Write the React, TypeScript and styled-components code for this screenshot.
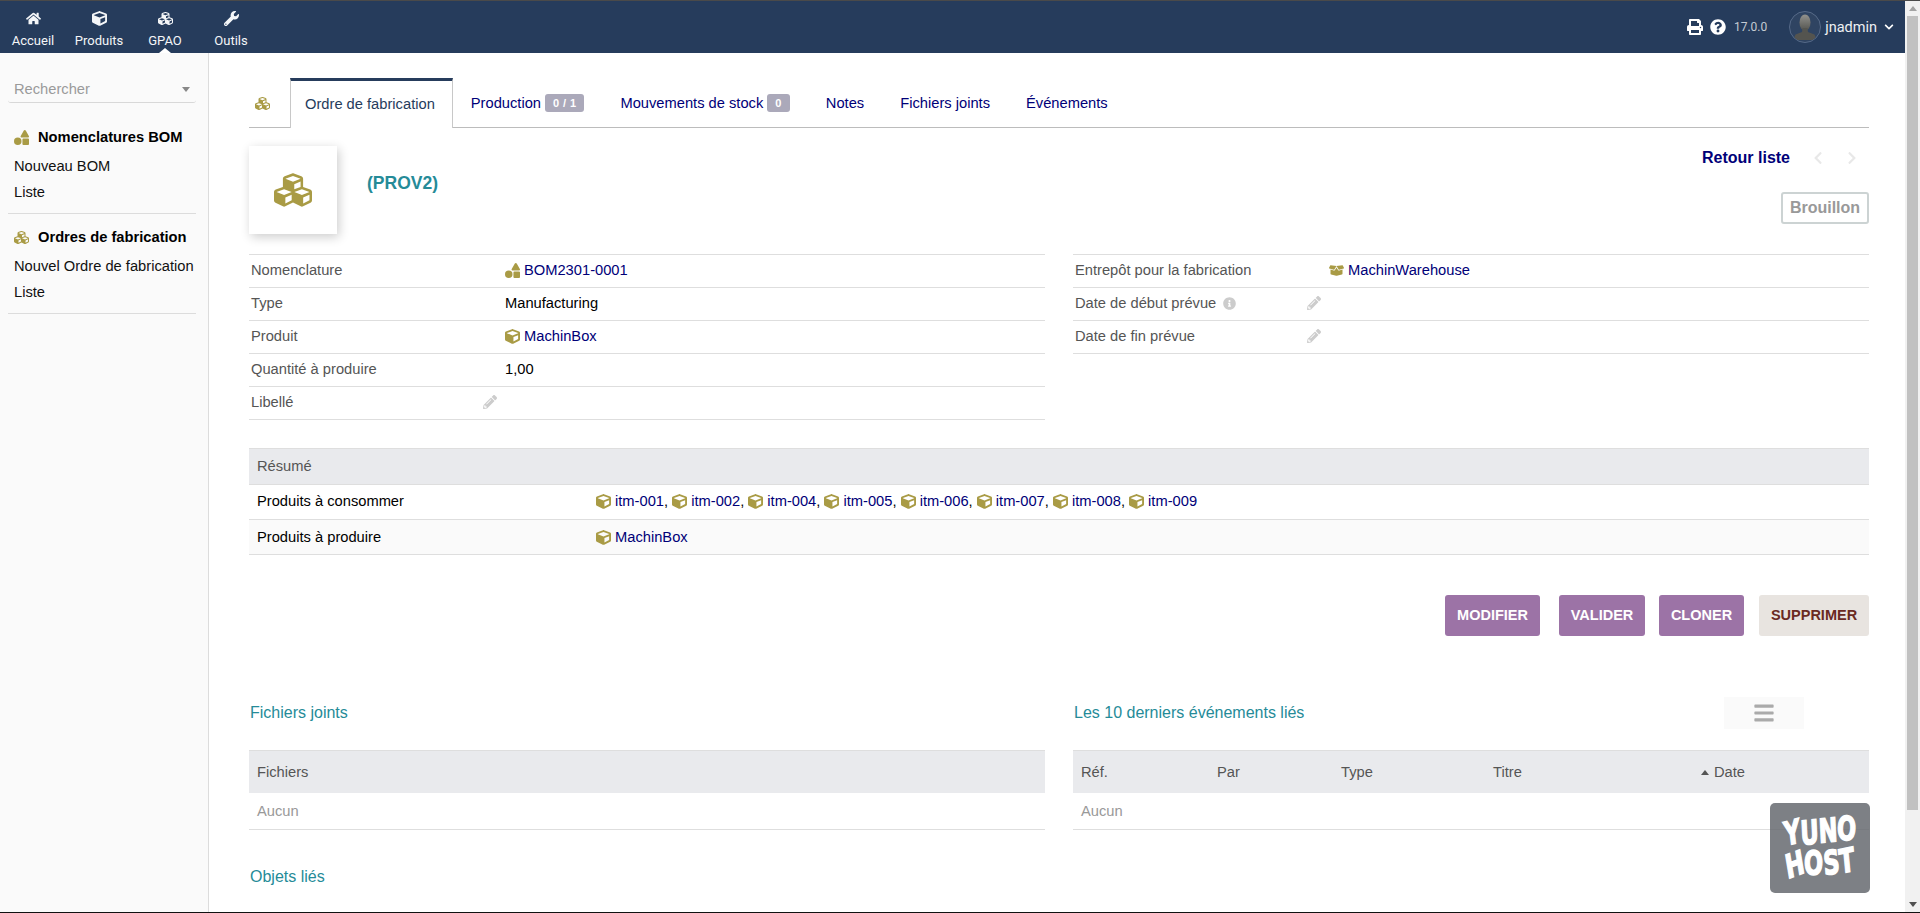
import { createGlobalStyle, styled } from "styled-components";
import { ReactNode } from "react";
import {
  FaBars,
  FaBoxOpen,
  FaChevronDown,
  FaChevronLeft,
  FaChevronRight,
  FaCube,
  FaCubes,
  FaHome,
  FaInfoCircle,
  FaPencilAlt,
  FaPrint,
  FaQuestionCircle,
  FaShapes,
  FaWrench,
} from "react-icons/fa";

const navy = "#263c5c";
const link = "#000078";
const olive = "#a99b45";
const teal = "#258b98";
const line = "#dedede";

const GlobalStyle = createGlobalStyle`
  html, body {
    margin: 0;
    height: 100%;
    overflow: hidden;
    background: #fff;
  }
  body {
    font-family: "Liberation Sans", Arial, sans-serif;
    font-size: 14.7px;
    color: #000;
  }
  * {
    box-sizing: border-box;
  }
`;

const Screen = styled.div`
  height: 913px;
  display: flex;
  border-top: 1px solid #4a4a4a;
  border-bottom: 1px solid #111;
  overflow: hidden;
`;

const Page = styled.div`
  flex: 1;
  min-width: 0;
  display: flex;
  flex-direction: column;
  position: relative;
`;

const ScrollTrack = styled.div`
  width: 15px;
  background: #f1f1f1;
  display: flex;
  flex-direction: column;
  align-items: center;
`;

const ScrollArrow = styled.div`
  height: 15px;
  width: 15px;
  display: flex;
  align-items: center;
  justify-content: center;
`;

const ScrollThumb = styled.div`
  width: 11px;
  height: 794px;
  background: #c1c1c1;
`;

const ScrollSpace = styled.div`
  flex: 1;
`;

const Caret = styled.span<{ $up?: boolean; $color: string }>`
  display: inline-block;
  flex: none;
  width: 0;
  height: 0;
  border-left: 4px solid transparent;
  border-right: 4px solid transparent;
  ${(p) => (p.$up ? "border-bottom" : "border-top")}: 5px solid ${(p) => p.$color};
`;

const TopBar = styled.header`
  height: 52px;
  flex: none;
  background: ${navy};
  display: flex;
  align-items: stretch;
  color: #fff;
`;

const NavItem = styled.div<{ $active?: boolean }>`
  width: 66px;
  position: relative;
  display: flex;
  flex-direction: column;
  align-items: center;
  padding-top: 10px;
  font-family: Roboto, sans-serif;
  font-size: 13px;
  color: #f4f6f8;

  &::after {
    content: "";
    display: ${(p) => (p.$active ? "block" : "none")};
    position: absolute;
    bottom: 0;
    left: 50%;
    margin-left: -6px;
    border: 6px solid transparent;
    border-top: 0;
    border-bottom: 5px solid #fff;
  }
`;

const NavLabel = styled.span`
  margin-top: 7px;
  line-height: 15px;
`;

const TopRight = styled.div`
  margin-left: auto;
  display: flex;
  align-items: center;
  padding-right: 11px;
`;

const HelpIcon = styled(FaQuestionCircle)`
  margin-left: 7px;
`;

const Version = styled.span`
  font-family: Roboto, sans-serif;
  font-size: 12px;
  color: #c4cad2;
  margin-left: 8px;
  margin-right: 22px;
`;

const Avatar = styled.div`
  width: 32px;
  height: 32px;
  border-radius: 50%;
  border: 1px solid #566a88;
  overflow: hidden;
  margin-right: 4px;
  background: #2f4462;
`;

const UserName = styled.span`
  font-family: Roboto, sans-serif;
  font-size: 14.5px;
  color: #eef0f3;
  margin-right: 7px;
`;

const Body = styled.div`
  flex: 1;
  min-height: 0;
  display: flex;
`;

const Sidebar = styled.aside`
  width: 209px;
  flex: none;
  background: #fafafa;
  border-right: 1px solid #dcdcdc;
  padding: 26px 12px 0 8px;
`;

const Search = styled.div`
  height: 24px;
  display: flex;
  align-items: center;
  justify-content: space-between;
  padding: 0 6px 3px;
  border-bottom: 1px solid #d8d8d8;
  border-radius: 0 0 3px 3px;
  color: #9a9a9a;
  margin-bottom: 24px;
`;

const MenuBlock = styled.div`
  border-bottom: 1px solid #dcdcdc;
  padding: 0 0 8px 6px;
  margin-bottom: 13px;
`;

const MenuTitle = styled.div`
  display: flex;
  align-items: center;
  gap: 9px;
  font-weight: 700;
  height: 20px;
  margin-bottom: 6px;
  color: #000;
  white-space: nowrap;
`;

const MenuEntry = styled.div`
  height: 26px;
  line-height: 26px;
  white-space: nowrap;
  color: #111;
`;

const Main = styled.main`
  flex: 1;
  min-width: 0;
  padding: 25px 36px 0 40px;
`;

const Tabs = styled.nav`
  height: 50px;
  display: flex;
  border-bottom: 1px solid #bcbcbc;
`;

const TabIcon = styled.div`
  width: 41px;
  display: flex;
  align-items: center;
  padding: 1px 0 0 6px;
`;

const Tab = styled.div<{ $active?: boolean }>`
  height: ${(p) => (p.$active ? "50px" : "49px")};
  padding: ${(p) => (p.$active ? "0 17px 2px 14px" : "1px 17px 0")};
  margin-right: ${(p) => (p.$active ? "1px" : "2px")};
  display: flex;
  align-items: center;
  gap: 4px;
  color: ${(p) => (p.$active ? navy : link)};
  background: #fff;
  white-space: nowrap;
  ${(p) =>
    p.$active
      ? `border: 1px solid #c8c8c8; border-top: 3px solid ${navy}; border-bottom: 0;`
      : ""}
`;

const Badge = styled.span`
  background: #aba9ba;
  color: #fff;
  font-size: 11px;
  font-weight: 700;
  letter-spacing: 0.4px;
  padding: 3px 8px;
  border-radius: 3px;
  line-height: 12px;
`;

const Banner = styled.div`
  height: 108px;
  margin-top: 18px;
  display: flex;
  align-items: flex-start;
  justify-content: space-between;
`;

const PhotoBox = styled.div`
  width: 88px;
  height: 88px;
  background: #fff;
  box-shadow: 2px 3px 10px rgba(0, 0, 0, 0.2);
  display: flex;
  align-items: center;
  justify-content: center;
`;

const BannerLeft = styled.div`
  display: flex;
  gap: 30px;
`;

const Ref = styled.div`
  margin-top: 27px;
  font-size: 17.5px;
  font-weight: 700;
  color: ${teal};
`;

const BannerRight = styled.div`
  display: flex;
  flex-direction: column;
  align-items: flex-end;
`;

const BackRow = styled.div`
  display: flex;
  align-items: center;
  gap: 20px;
  height: 24px;
  padding-right: 10px;
`;

const BackLink = styled.span`
  font-size: 16px;
  font-weight: 700;
  color: ${link};
  margin-right: 1px;
`;

const PageArrow = styled.span`
  color: #e8e8e8;
  display: flex;
`;

const Status = styled.div`
  margin-top: 22px;
  border: 2px solid #ccd3d3;
  border-radius: 3px;
  height: 32px;
  width: 88px;
  display: flex;
  align-items: center;
  justify-content: center;
  font-size: 16px;
  font-weight: 700;
  color: #999;
`;

const Columns = styled.div`
  display: grid;
  grid-template-columns: 796px 796px;
  justify-content: space-between;
  align-items: start;
`;

const FieldTable = styled.div`
  border-top: 1px solid ${line};
`;

const FieldRow = styled.div`
  height: 33px;
  display: flex;
  align-items: center;
  padding-bottom: 2px;
  border-bottom: 1px solid ${line};
`;

const FieldLabel = styled.div`
  width: 256px;
  flex: none;
  display: flex;
  align-items: center;
  justify-content: space-between;
  padding: 0 8px 0 2px;
  color: #555;
`;

const LabelText = styled.span`
  display: flex;
  align-items: center;
  gap: 7px;
`;

const Pencil = styled(FaPencilAlt)`
  color: #ccc;
  font-size: 14px;
`;

const IconLink = styled.span`
  display: inline-flex;
  align-items: center;
  gap: 4px;
  color: ${link};
`;

const SummaryTable = styled.div`
  margin-top: 28px;
  border-top: 1px solid ${line};
  border-bottom: 1px solid ${line};
`;

const HeaderRow = styled.div<{ $tall?: boolean }>`
  height: ${(p) => (p.$tall ? "42px" : "35px")};
  padding: 0 0 ${(p) => (p.$tall ? "0" : "2px")} 8px;
  background: #e9eaed;
  display: flex;
  align-items: center;
  color: #555;
`;

const SummaryRow = styled.div<{ $alt?: boolean }>`
  height: 35px;
  display: flex;
  align-items: center;
  padding: 0 0 ${(p) => (p.$alt ? "0" : "2px")} 8px;
  border-top: 1px solid ${line};
  background: ${(p) => (p.$alt ? "#fafafa" : "#fff")};
`;

const SummaryLabel = styled.div`
  width: 339px;
  flex: none;
`;

const ItemList = styled.div`
  display: flex;
  white-space: pre;
`;

const ItemEntry = styled.span`
  display: flex;
  align-items: center;
`;

const Actions = styled.div`
  display: flex;
  justify-content: flex-end;
  margin-top: 40px;
`;

const ActionButton = styled.div<{ $danger?: boolean; $width: number; $gap: number }>`
  width: ${(p) => p.$width}px;
  margin-left: ${(p) => p.$gap}px;
  height: 41px;
  padding-bottom: 1px;
  border-radius: 3px;
  display: flex;
  align-items: center;
  justify-content: center;
  font-size: 14.5px;
  font-weight: 700;
  background: ${(p) => (p.$danger ? "#e8e4e0" : "#9c73a6")};
  color: ${(p) => (p.$danger ? "#6a2a22" : "#fff")};
`;

const SectionTitle = styled.div`
  height: 32px;
  display: flex;
  align-items: center;
  font-size: 16px;
  color: ${teal};
  padding-left: 1px;
`;

const TitleBar = styled.div`
  display: flex;
  justify-content: space-between;
  padding-right: 65px;
`;

const ListToggle = styled.div`
  width: 80px;
  height: 32px;
  background: #fafafa;
  color: #aaa;
  display: flex;
  align-items: center;
  justify-content: center;
`;

const DataTable = styled.div`
  margin-top: 21px;
  border-top: 1px solid ${line};
  border-bottom: 1px solid ${line};
`;

const HeaderCell = styled.div<{ $width: number }>`
  width: ${(p) => p.$width}px;
  display: flex;
  align-items: center;
  gap: 5px;
`;

const EmptyRow = styled.div`
  height: 36px;
  display: flex;
  align-items: center;
  padding-left: 8px;
  color: #999;
`;

const LowerBlock = styled.div`
  margin-top: 61px;
`;

const LinkedTitle = styled(SectionTitle)`
  margin-top: 31px;
`;

const LogoBadge = styled.div`
  position: absolute;
  right: 35px;
  top: 802px;
  width: 100px;
  height: 90px;
  border-radius: 5px;
  background: rgba(100, 104, 110, 0.84);
  color: #fff;
  display: flex;
  flex-direction: column;
  align-items: center;
  justify-content: center;
  font-family: "DejaVu Sans", sans-serif;
  font-weight: 700;
`;

const LogoLine = styled.span`
  display: flex;
  height: 32px;
  line-height: 32px;
  font-size: 33px;
  transform: scaleX(0.68);
  -webkit-text-stroke: 1.5px #fff;
`;

const LogoLetter = styled.span<{ $tilt: number; $drop: number }>`
  display: block;
  transform: translateY(${(p) => p.$drop}px) rotate(${(p) => p.$tilt}deg);
`;

const Box = ({ size = 15 }: { size?: number }) => <FaCube size={size} color={olive} />;

const Field = ({ label, children }: { label: ReactNode; children?: ReactNode }) => (
  <FieldRow>
    <FieldLabel>{label}</FieldLabel>
    {children}
  </FieldRow>
);

const items = ["itm-001", "itm-002", "itm-004", "itm-005", "itm-006", "itm-007", "itm-008", "itm-009"];

const logoTop = [
  { c: "Y", tilt: -10, drop: 1 },
  { c: "U", tilt: -4, drop: 1 },
  { c: "N", tilt: -4, drop: -1 },
  { c: "O", tilt: 4, drop: -3 },
];

const logoBottom = [
  { c: "H", tilt: -14, drop: 1 },
  { c: "O", tilt: 0, drop: 0 },
  { c: "S", tilt: -6, drop: -1 },
  { c: "T", tilt: -8, drop: -3 },
];

export default function App() {
  return (
    <>
      <GlobalStyle />
      <Screen>
        <Page>
          <TopBar>
            <NavItem>
              <FaHome size={15} />
              <NavLabel>Accueil</NavLabel>
            </NavItem>
            <NavItem>
              <FaCube size={15} />
              <NavLabel>Produits</NavLabel>
            </NavItem>
            <NavItem $active>
              <FaCubes size={15} />
              <NavLabel>GPAO</NavLabel>
            </NavItem>
            <NavItem>
              <FaWrench size={15} />
              <NavLabel>Outils</NavLabel>
            </NavItem>
            <TopRight>
              <FaPrint size={16} />
              <HelpIcon size={16} />
              <Version>17.0.0</Version>
              <Avatar>
                <svg width="30" height="30" viewBox="0 0 30 30">
                  <defs>
                    <linearGradient id="head" x1="0" y1="0" x2="0" y2="1">
                      <stop offset="0" stopColor="#92928e" />
                      <stop offset="1" stopColor="#54544f" />
                    </linearGradient>
                  </defs>
                  <ellipse cx="15" cy="10.5" rx="5.5" ry="8" fill="url(#head)" />
                  <path d="M12.5 16h5l.5 4 6.5 2.5 1.5 3.5-3 2H7l-3-2 1.5-3.5L12 20z" fill="#54544f" />
                </svg>
              </Avatar>
              <UserName>jnadmin</UserName>
              <FaChevronDown size={10} />
            </TopRight>
          </TopBar>
          <Body>
            <Sidebar>
              <Search>
                Rechercher
                <Caret $color="#888" />
              </Search>
              <MenuBlock>
                <MenuTitle>
                  <FaShapes size={15} color={olive} />
                  Nomenclatures BOM
                </MenuTitle>
                <MenuEntry>Nouveau BOM</MenuEntry>
                <MenuEntry>Liste</MenuEntry>
              </MenuBlock>
              <MenuBlock>
                <MenuTitle>
                  <FaCubes size={15} color={olive} />
                  Ordres de fabrication
                </MenuTitle>
                <MenuEntry>Nouvel Ordre de fabrication</MenuEntry>
                <MenuEntry>Liste</MenuEntry>
              </MenuBlock>
            </Sidebar>
            <Main>
              <Tabs>
                <TabIcon>
                  <FaCubes size={15} color={olive} />
                </TabIcon>
                <Tab $active>Ordre de fabrication</Tab>
                <Tab>
                  Production <Badge>0 / 1</Badge>
                </Tab>
                <Tab>
                  Mouvements de stock <Badge>0</Badge>
                </Tab>
                <Tab>Notes</Tab>
                <Tab>Fichiers joints</Tab>
                <Tab>Événements</Tab>
              </Tabs>
              <Banner>
                <BannerLeft>
                  <PhotoBox>
                    <FaCubes size={38} color={olive} />
                  </PhotoBox>
                  <Ref>(PROV2)</Ref>
                </BannerLeft>
                <BannerRight>
                  <BackRow>
                    <BackLink>Retour liste</BackLink>
                    <PageArrow>
                      <FaChevronLeft size={14} />
                    </PageArrow>
                    <PageArrow>
                      <FaChevronRight size={14} />
                    </PageArrow>
                  </BackRow>
                  <Status>Brouillon</Status>
                </BannerRight>
              </Banner>
              <Columns>
                <FieldTable>
                  <Field label="Nomenclature">
                    <IconLink>
                      <FaShapes size={15} color={olive} />
                      BOM2301-0001
                    </IconLink>
                  </Field>
                  <Field label="Type">Manufacturing</Field>
                  <Field label="Produit">
                    <IconLink>
                      <Box />
                      MachinBox
                    </IconLink>
                  </Field>
                  <Field label="Quantité à produire">1,00</Field>
                  <Field
                    label={
                      <>
                        Libellé
                        <Pencil />
                      </>
                    }
                  />
                </FieldTable>
                <FieldTable>
                  <Field label="Entrepôt pour la fabrication">
                    <IconLink>
                      <FaBoxOpen size={15} color={olive} />
                      MachinWarehouse
                    </IconLink>
                  </Field>
                  <Field
                    label={
                      <>
                        <LabelText>
                          Date de début prévue <FaInfoCircle size={13} color="#ccc" />
                        </LabelText>
                        <Pencil />
                      </>
                    }
                  />
                  <Field
                    label={
                      <>
                        Date de fin prévue
                        <Pencil />
                      </>
                    }
                  />
                </FieldTable>
              </Columns>
              <SummaryTable>
                <HeaderRow>Résumé</HeaderRow>
                <SummaryRow>
                  <SummaryLabel>Produits à consommer</SummaryLabel>
                  <ItemList>
                    {items.map((item, i) => (
                      <ItemEntry key={item}>
                        <IconLink>
                          <Box />
                          {item}
                        </IconLink>
                        {i < items.length - 1 ? ", " : ""}
                      </ItemEntry>
                    ))}
                  </ItemList>
                </SummaryRow>
                <SummaryRow $alt>
                  <SummaryLabel>Produits à produire</SummaryLabel>
                  <IconLink>
                    <Box />
                    MachinBox
                  </IconLink>
                </SummaryRow>
              </SummaryTable>
              <Actions>
                <ActionButton $width={95} $gap={0}>MODIFIER</ActionButton>
                <ActionButton $width={86} $gap={19}>VALIDER</ActionButton>
                <ActionButton $width={85} $gap={14}>CLONER</ActionButton>
                <ActionButton $width={110} $gap={15} $danger>SUPPRIMER</ActionButton>
              </Actions>
              <LowerBlock>
                <Columns>
                  <div>
                    <SectionTitle>Fichiers joints</SectionTitle>
                    <DataTable>
                      <HeaderRow $tall>Fichiers</HeaderRow>
                      <EmptyRow>Aucun</EmptyRow>
                    </DataTable>
                  </div>
                  <div>
                    <TitleBar>
                      <SectionTitle>Les 10 derniers événements liés</SectionTitle>
                      <ListToggle>
                        <FaBars size={22} />
                      </ListToggle>
                    </TitleBar>
                    <DataTable>
                      <HeaderRow $tall>
                        <HeaderCell $width={136}>Réf.</HeaderCell>
                        <HeaderCell $width={124}>Par</HeaderCell>
                        <HeaderCell $width={152}>Type</HeaderCell>
                        <HeaderCell $width={208}>Titre</HeaderCell>
                        <HeaderCell $width={60}>
                          <Caret $up $color="#555" />
                          Date
                        </HeaderCell>
                      </HeaderRow>
                      <EmptyRow>Aucun</EmptyRow>
                    </DataTable>
                  </div>
                </Columns>
                <LinkedTitle>Objets liés</LinkedTitle>
              </LowerBlock>
            </Main>
          </Body>
          <LogoBadge>
            <LogoLine>
              {logoTop.map((l) => (
                <LogoLetter key={l.c} $tilt={l.tilt} $drop={l.drop}>{l.c}</LogoLetter>
              ))}
            </LogoLine>
            <LogoLine>
              {logoBottom.map((l) => (
                <LogoLetter key={l.c} $tilt={l.tilt} $drop={l.drop}>{l.c}</LogoLetter>
              ))}
            </LogoLine>
          </LogoBadge>
        </Page>
        <ScrollTrack>
          <ScrollArrow>
            <Caret $up $color="#a3a3a3" />
          </ScrollArrow>
          <ScrollThumb />
          <ScrollSpace />
          <ScrollArrow>
            <Caret $color="#505050" />
          </ScrollArrow>
        </ScrollTrack>
      </Screen>
    </>
  );
}
